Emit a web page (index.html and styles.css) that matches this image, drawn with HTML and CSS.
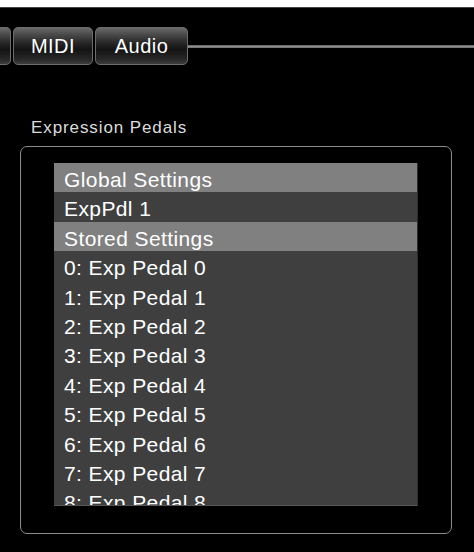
FILE: index.html
```html
<!DOCTYPE html>
<html>
<head>
<meta charset="utf-8">
<link rel="stylesheet" href="styles.css">
</head>
<body>
<div class="topband"></div>
<div class="tabbar">
  <div class="tab tab-partial"></div>
  <div class="tab tab-midi">MIDI</div>
  <div class="tab tab-audio">Audio</div>
  <div class="tabline"></div>
</div>
<div class="label">Expression Pedals</div>
<div class="groupbox">
  <div class="list">
    <div class="row header">Global Settings</div>
    <div class="row">ExpPdl 1</div>
    <div class="row header">Stored Settings</div>
    <div class="row">0: Exp Pedal 0</div>
    <div class="row">1: Exp Pedal 1</div>
    <div class="row">2: Exp Pedal 2</div>
    <div class="row">3: Exp Pedal 3</div>
    <div class="row">4: Exp Pedal 4</div>
    <div class="row">5: Exp Pedal 5</div>
    <div class="row">6: Exp Pedal 6</div>
    <div class="row">7: Exp Pedal 7</div>
    <div class="row">8: Exp Pedal 8</div>
  </div>
</div>
</body>
</html>
```

FILE: styles.css
```css
html, body {
  margin: 0;
  padding: 0;
  background: #000;
  width: 474px;
  height: 552px;
  overflow: hidden;
  font-family: "Liberation Sans", Arial, sans-serif;
}

.topband {
  height: 8px;
  background: #fff;
  border-bottom: 1px solid #444;
  box-sizing: border-box;
}

.tabbar {
  display: flex;
  align-items: center;
  margin-top: 19px;
  height: 38px;
  gap: 2px;
}

.tab {
  box-sizing: border-box;
  height: 38px;
  border: 1px solid #6c6c6c;
  border-radius: 5px;
  background: linear-gradient(to bottom, #6a6a6a 0%, #4a4a4a 18%, #222 45%, #141414 60%, #262626 85%, #3c3c3c 100%);
  color: #fff;
  font-size: 20px;
  letter-spacing: 0.5px;
  display: flex;
  align-items: center;
  justify-content: center;
  padding-top: 1px;
}

.tab-partial {
  width: 11px;
  border-left: none;
  border-radius: 0 5px 5px 0;
}

.tab-midi {
  width: 80px;
}

.tab-audio {
  width: 93px;
}

.tabline {
  flex: 1;
  height: 3px;
  background: linear-gradient(to bottom, #5a5a5a, #8e8e8e 50%, #6a6a6a);
  margin-left: -2px;
}

.label {
  margin-top: 54px;
  padding-left: 31px;
  color: #dcdcdc;
  font-size: 17px;
  letter-spacing: 0.9px;
  line-height: 18px;
}

.groupbox {
  box-sizing: border-box;
  margin-top: 9px;
  margin-left: 20px;
  width: 432px;
  height: 388px;
  border: 1.5px solid #8c8c8c;
  border-radius: 7px;
  padding: 16px 0 0 33px;
}

.list {
  box-sizing: border-box;
  width: 364px;
  height: 343px;
  background: #3f3f3f;
  overflow: hidden;
  border-right: 1px solid #2c2c2c;
  border-bottom: 1px solid #575757;
}

.row {
  box-sizing: border-box;
  height: 29.4px;
  line-height: 29.4px;
  padding-left: 10px;
  padding-top: 2px;
  color: #fff;
  font-size: 21px;
  letter-spacing: 0.4px;
  white-space: nowrap;
}

.row.header {
  background: #808080;
}
```
